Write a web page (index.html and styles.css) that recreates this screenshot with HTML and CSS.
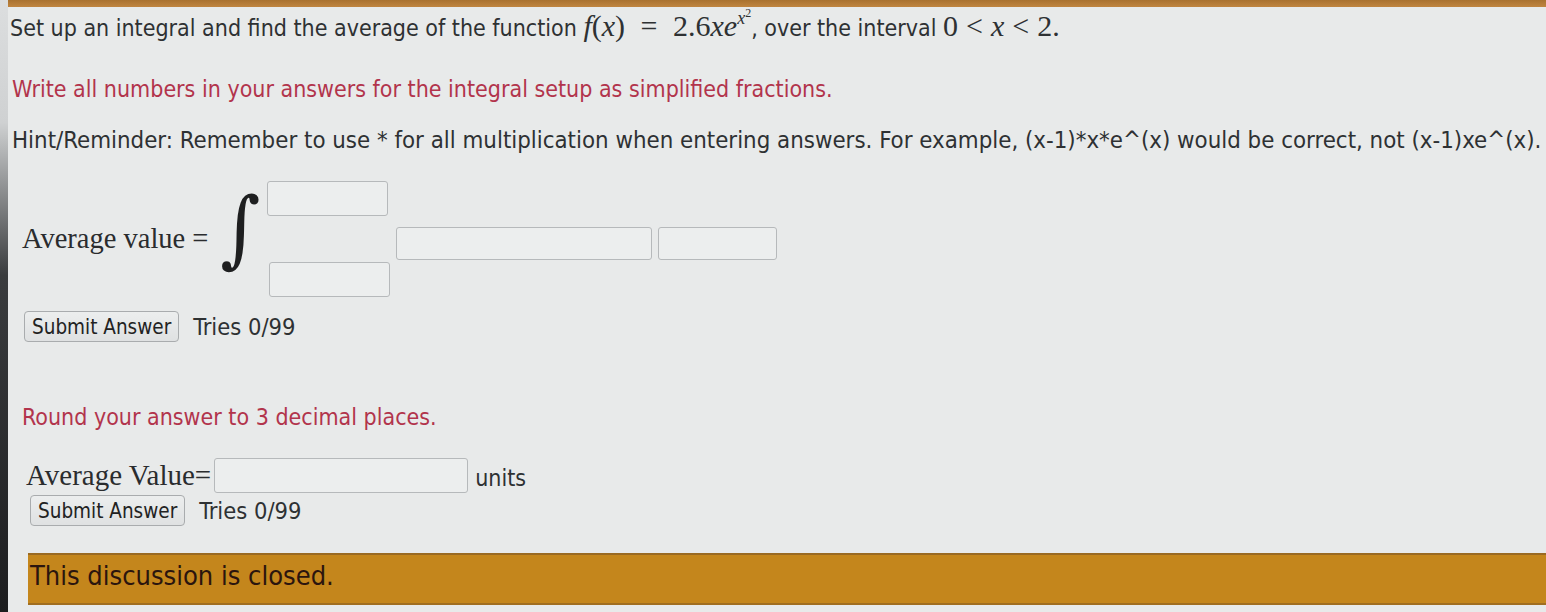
FILE: index.html
```html
<!DOCTYPE html>
<html>
<head>
<meta charset="utf-8">
<link rel="stylesheet" href="styles.css">
</head>
<body>
<div class="topbar"></div>
<div class="page">
  <p class="q">Set up an integral and find the average of the function <span class="math"><i>f</i>(<i>x</i>) <span class="op">=</span> 2.6<i>xe</i><sup class="sup"><i>x</i><sup class="sup2">2</sup></sup></span>, over the interval <span class="math">0<span class="op">&lt;</span><i>x</i><span class="op">&lt;</span>2.</span></p>
  <p class="red note1">Write all numbers in your answers for the integral setup as simplified fractions.</p>
  <p class="hint">Hint/Reminder: Remember to use * for all multiplication when entering answers. For example, (x-1)*x*e^(x) would be correct, not (x-1)xe^(x).</p>

  <div class="integral-row">
    <span class="mlabel">Average value =</span>
    <span class="intsign">∫</span>
    <div class="limits">
      <span class="box lim-up"></span>
      <span class="box lim-low"></span>
    </div>
    <span class="box integrand"></span>
    <span class="box dvar"></span>
  </div>

  <div class="submit-row first">
    <button class="btn">Submit Answer</button>
    <span class="tries">Tries 0/99</span>
  </div>

  <p class="red note2">Round your answer to 3 decimal places.</p>

  <div class="value-row">
    <span class="mlabel v">Average Value=</span>
    <span class="box answer"></span>
    <span class="units">units</span>
  </div>
  <div class="submit-row second">
    <button class="btn">Submit Answer</button>
    <span class="tries">Tries 0/99</span>
  </div>

  <div class="closed">This discussion is closed.</div>
</div>
</body>
</html>
```
FILE: styles.css
```css
html, body {
  margin: 0;
  padding: 0;
  background: #e8eaea;
  width: 1546px;
  height: 612px;
  overflow: hidden;
}
body {
  font-family: "DejaVu Sans Condensed", "DejaVu Sans", sans-serif;
  color: #2e3133;
  position: relative;
}
body::before {
  content: "";
  position: absolute;
  left: 0;
  top: 0;
  width: 8px;
  height: 612px;
  background: linear-gradient(to bottom, #dcdedf 0%, #cfd1d2 20%, #3a3c3e 45%, #1c1d1f 100%);
}
.topbar {
  height: 7px;
  margin-left: 8px;
  background: linear-gradient(to bottom, #a9722f, #c08540);
}
.page {
  padding-left: 10px;
}
p { margin: 0; }
.q {
  font-size: 23px;
  line-height: 40px;
  height: 40px;
  margin-top: 1px;
}
.math {
  font-family: "Liberation Serif", serif;
  font-size: 30px;
  line-height: 0;
}
.math i { font-style: italic; }
.op { margin: 0 8px; }
.sup {
  font-size: 18px;
  vertical-align: 12px;
  line-height: 0;
}
.sup2 {
  font-size: 12px;
  vertical-align: 7px;
  line-height: 0;
}
.red {
  color: #b2344c;
}
.note1 {
  font-size: 23px;
  margin-top: 26px;
  margin-left: 2px;
  line-height: 30px;
}
.hint {
  font-size: 23.8px;
  margin-top: 21px;
  margin-left: 2px;
  line-height: 30px;
  white-space: nowrap;
}
.integral-row {
  display: flex;
  align-items: center;
  margin-top: 26px;
  margin-left: 12px;
  height: 116px;
}
.mlabel {
  font-family: "Liberation Serif", serif;
  font-size: 28.5px;
  color: #2a2c2e;
}
.intsign {
  font-family: "DejaVu Serif", serif;
  font-size: 70px;
  line-height: 1;
  transform: translateY(-11px) scale(1.1, 1.2);
  margin-left: 14px;
  margin-right: 8px;
  color: #1e1f20;
}
.limits {
  display: flex;
  flex-direction: column;
  justify-content: space-between;
  height: 116px;
}
.box {
  display: block;
  border: 1.5px solid #b6b9bb;
  border-radius: 3px;
  background: #eceeee;
  box-sizing: border-box;
}
.lim-up { width: 121px; height: 35px; }
.lim-low { width: 121px; height: 35px; margin-left: 2px; }
.integrand { width: 256px; height: 33px; margin-left: 6px; margin-top: 8px; }
.dvar { width: 119px; height: 33px; margin-left: 6px; margin-top: 8px; }
.submit-row {
  display: flex;
  align-items: center;
}
.submit-row.first {
  margin-top: 14px;
  margin-left: 14px;
}
.btn {
  font-family: "DejaVu Sans Condensed", "DejaVu Sans", sans-serif;
  font-size: 20.5px;
  color: #222;
  background: linear-gradient(#eceeee, #dfe1e2);
  border: 1.5px solid #a9acae;
  border-radius: 4px;
  padding: 0 7px;
  height: 31px;
}
.tries {
  font-size: 23.5px;
  margin-left: 14px;
}
.note2 {
  font-size: 23px;
  margin-top: 60px;
  margin-left: 12px;
  line-height: 30px;
}
.value-row {
  display: flex;
  align-items: center;
  margin-top: 26px;
  margin-left: 16px;
}
.mlabel.v { font-size: 29px; }
.answer { width: 254px; height: 35px; margin-left: 3px; }
.units { font-size: 23px; margin-left: 7px; margin-top: 4px; }
.submit-row.second {
  margin-top: 2px;
  margin-left: 20px;
}
.closed {
  margin-top: 27px;
  margin-left: 18px;
  height: 52px;
  background: #c4861c;
  border-top: 2px solid #9a6a22;
  border-bottom: 2px solid #a06e20;
  color: #2b150e;
  font-size: 27px;
  line-height: 42px;
  padding-left: 2px;
  box-sizing: border-box;
}
```
